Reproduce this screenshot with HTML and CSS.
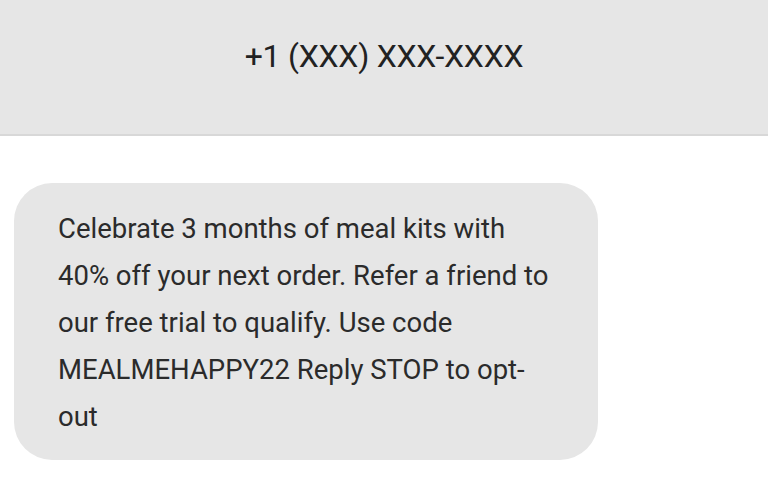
FILE: index.html
```html
<!DOCTYPE html>
<html lang="en">
<head>
    <meta charset="UTF-8">
    <meta name="viewport" content="width=device-width, initial-scale=1.0">
    <title>Message</title>
    <link rel="stylesheet" href="styles.css">
</head>
<body>
    <header class="thread-header">
        <h1 class="contact">+1 (XXX) XXX-XXXX</h1>
    </header>
    <main class="thread">
        <div class="bubble">
            Celebrate 3 months of meal kits with 40% off your next order. Refer a friend to our free trial to qualify. Use code MEALMEHAPPY22 Reply STOP to opt-out
        </div>
    </main>
</body>
</html>
```

FILE: styles.css
```css
body {
    margin: 0;
    font-family: Roboto, "Liberation Sans", sans-serif;
    background: white;
    color: #2b2b2b;
}
.thread-header {
    height: 134px;
    background: #e6e6e6;
    border-bottom: 2px solid #d8d8d8;
    display: flex;
    align-items: center;
    justify-content: center;
}
.contact {
    margin: 0 0 22px;
    font-size: 32px;
    font-weight: normal;
    letter-spacing: -0.25px;
    color: #222;
}
.thread {
    padding: 47px 14px;
}
.bubble {
    width: 496px;
    background: #e6e6e6;
    border-radius: 38px;
    padding: 22px 44px 20px;
    font-size: 27.5px;
    line-height: 47px;
}
```
